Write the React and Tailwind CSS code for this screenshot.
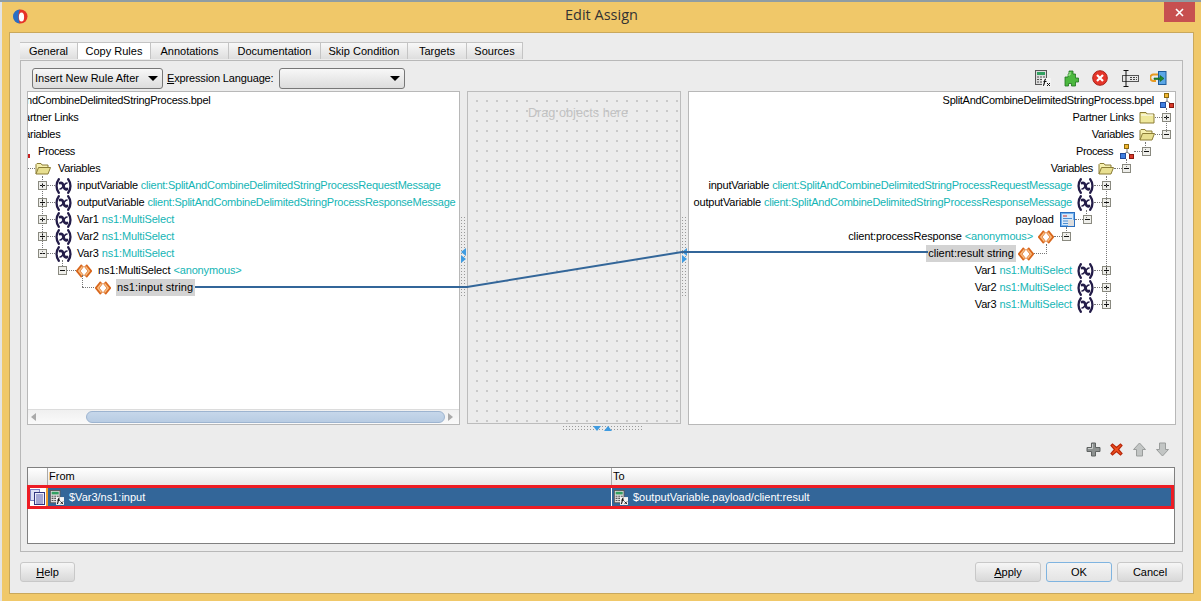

const FONT = "font-['Liberation_Sans',sans-serif]";

function Box({ open }) {
  return (
    <svg width="9" height="9" viewBox="0 0 9 9" className="shrink-0 block">
      <rect x="0.5" y="0.5" width="8" height="8" fill="#eeeeea" stroke="#8a8a80" />
      <path d={open ? "M2 4.5H7" : "M2 4.5H7M4.5 2V7"} stroke="#111" fill="none" />
    </svg>
  );
}
function Dots({ className }) {
  return <span className={`shrink-0 border-t border-dotted border-[#777] h-0 ${className}`} />;
}
function XVar() {
  return (
    <svg width="17" height="16" viewBox="0 0 17 16" className="shrink-0 block">
      <g fill="none" stroke="#231c48" strokeLinecap="round">
        <path d="M3.8 1.2C0.8 5 0.8 11 3.8 14.8" strokeWidth="2.3" />
        <path d="M13.2 1.2C16.2 5 16.2 11 13.2 14.8" strokeWidth="2.3" />
        <path d="M5 5C7 4.2 8 6 8.5 8S10 12.2 12 11" strokeWidth="2.7" />
        <path d="M12 5C10 5 9.5 7 8.5 8S7 11 5 11" strokeWidth="1.6" />
      </g>
    </svg>
  );
}
function Diamond() {
  return (
    <svg width="16" height="14" viewBox="0 0 16 14" className="shrink-0 block">
      <path d="M6.5 1.5L2 7L6.5 12.5M9.5 1.5L14 7L9.5 12.5" fill="none" stroke="#d8661c" strokeWidth="3.6" />
      <path d="M6.5 2.5L2.8 7L6.5 11.5M9.5 2.5L13.2 7L9.5 11.5" fill="none" stroke="#f9bd80" strokeWidth="1.4" />
    </svg>
  );
}
function FolderOpen() {
  return (
    <svg width="16" height="13" viewBox="0 0 16 13" className="shrink-0 block">
      <path d="M1 12V2.5L2 1.5H6L7 3H13V5" fill="#f6f0b0" stroke="#8b7d36" />
      <path d="M1 12L3.5 5.5H15.5L13 12Z" fill="#e8df90" stroke="#8b7d36" />
    </svg>
  );
}
function FolderClosed() {
  return (
    <svg width="16" height="13" viewBox="0 0 16 13" className="shrink-0 block">
      <path d="M1 12V1.5H7L8 3H15V12Z" fill="#efe89c" stroke="#8b7d36" />
      <path d="M2 4H14" stroke="#fff" />
    </svg>
  );
}
function ProcessIcon() {
  return (
    <svg width="14" height="15" viewBox="0 0 14 15" className="shrink-0 block">
      <path d="M7 5V8M3 11L7 8L11 11" stroke="#777" fill="none" />
      <rect x="4.5" y="0.5" width="4" height="4" fill="#f2b632" stroke="#8a6a10" />
      <rect x="0.5" y="9.5" width="5" height="5" fill="#3f7fe0" stroke="#1f4a99" />
      <rect x="9.5" y="10.5" width="4" height="4" fill="#d83a2a" stroke="#8a1a10" />
    </svg>
  );
}
function Payload() {
  return (
    <svg width="15" height="15" viewBox="0 0 15 15" className="shrink-0 block">
      <rect x="0.5" y="0.5" width="14" height="14" fill="#6fb0ee" stroke="#2a6fc0" />
      <rect x="2" y="2" width="11" height="11" fill="#d8e9fa" />
      <path d="M3 4H7" stroke="#c83030" />
      <path d="M3 6.5H12M3 9H12M3 11.5H10" stroke="#4f8fd0" />
      <rect x="8" y="8" width="6" height="6" fill="#dddddd" />
    </svg>
  );
}
function Calc({ small }) {
  return (
    <svg width={small ? 15 : 17} height={small ? 15 : 17} viewBox="0 0 17 17" className="shrink-0 block">
      <rect x="1.5" y="0.5" width="11" height="14" fill="#dcdcdc" stroke="#555" />
      <rect x="3" y="2" width="8" height="3" fill="#31a060" />
      <path d="M3 7H5M6 7H8M9 7H11M3 9.5H5M6 9.5H8M3 12H5M6 12H8" stroke="#555" strokeWidth="1.2" />
      <rect x="8" y="8" width="9" height="9" fill="#f4f4f4" />
      <path d="M12 9C10.5 9 10.7 10.5 10.5 12S10 15.5 9 15.5M9.5 11.5H12.5" stroke="#111" fill="none" strokeWidth="1.2" />
      <path d="M13 13L16 16M16 13L13 16" stroke="#111" />
    </svg>
  );
}
function Puzzle() {
  return (
    <svg width="15" height="17" viewBox="0 0 15 17" className="block">
      <path d="M5 1H9V4H11.5V8H14.5V12H11.5V16H7.5V13.5H4.5V16H1V7H4V4H5Z" fill="#4cb83f" stroke="#20751f" strokeWidth="0.8" />
      <path d="M6 2V5H3" stroke="#b5f0a8" fill="none" />
    </svg>
  );
}
function RedCircle() {
  return (
    <svg width="16" height="16" viewBox="0 0 16 16" className="block">
      <circle cx="8" cy="8" r="7.3" fill="#e5352a" stroke="#a8231a" />
      <path d="M5 5L11 11M11 5L5 11" stroke="#fff" strokeWidth="2.2" />
    </svg>
  );
}
function FieldCursor() {
  return (
    <svg width="18" height="17" viewBox="0 0 18 17" className="block">
      <rect x="1.5" y="5.5" width="16" height="6" fill="#e8e8e8" stroke="#555" />
      <path d="M9 7.5H16M9 9.5H16" stroke="#444" strokeDasharray="2 1" />
      <path d="M2.5 0.5H7.5M2.5 16.5H7.5M5 0.5V16.5" stroke="#111" fill="none" />
    </svg>
  );
}
function ArrowDoor() {
  return (
    <svg width="17" height="16" viewBox="0 0 17 16" className="block">
      <rect x="8.5" y="1.5" width="7.5" height="13" fill="#5aa6e6" stroke="#1c5c9c" />
      <path d="M8 4.5H3.5A2.7 2.7 0 0 0 3.5 11H6" fill="none" stroke="#e89a20" strokeWidth="2" />
      <path d="M4 8H10V5.5L14 8.5L10 11.5V9.5H4Z" fill="#1f8a30" stroke="#14601f" strokeWidth="0.6" />
    </svg>
  );
}
function GrayPlus() {
  return (
    <svg width="15" height="15" viewBox="0 0 15 15" className="block">
      <path d="M5.5 1H9.5V5.5H14V9.5H9.5V14H5.5V9.5H1V5.5H5.5Z" fill="#8d9190" stroke="#5f6362" />
      <path d="M6.5 2V6.5H2" stroke="#c9cccb" fill="none" />
    </svg>
  );
}
function RedX() {
  return (
    <svg width="15" height="15" viewBox="0 0 15 15" className="block">
      <path d="M2 3.5L3.5 2L7.5 5.5L11.5 2L13 3.5L9.5 7.5L13 11.5L11.5 13L7.5 9.5L3.5 13L2 11.5L5.5 7.5Z" fill="#f0501e" stroke="#b8280c" strokeWidth="1.2" />
    </svg>
  );
}
function GrayArrow({ down }) {
  return (
    <svg width="15" height="15" viewBox="0 0 15 15" className={down ? "block rotate-180" : "block"}>
      <path d="M7.5 1L13.5 7.5H10.5V14H4.5V7.5H1.5Z" fill="#c2c5c4" stroke="#9a9d9c" />
    </svg>
  );
}
function CopyIcon() {
  return (
    <svg width="16" height="16" viewBox="0 0 16 16" className="block">
      <rect x="0.5" y="0.5" width="9" height="11" fill="#dde0f5" stroke="#7a80c0" />
      <rect x="4.5" y="3.5" width="10" height="12" fill="#eceefa" stroke="#30357f" />
      <path d="M6 6H13M6 8H13M6 10H13M6 12H13M6 14H13" stroke="#5a60b0" />
    </svg>
  );
}
function AppLogo() {
  return (
    <svg width="15" height="15" viewBox="0 0 15 15" className="block">
      <circle cx="7.5" cy="7.5" r="7" fill="#e63228" />
      <path d="M7 .5A7 7 0 0 0 7 14.5C5 12 5 3 7 .5Z" fill="#2a6fc4" />
      <ellipse cx="8.5" cy="8" rx="2.6" ry="4.6" fill="#fff" />
    </svg>
  );
}
function Caret() {
  return <span className="w-0 h-0 border-l-[5px] border-r-[5px] border-t-[5px] border-l-transparent border-r-transparent border-t-black" />;
}
function Teal({ children, long }) {
  return <span className={`text-[#14b5b5] ${long ? "tracking-[-0.24px]" : "tracking-[-0.14px]"}`}>{children}</span>;
}
function Row({ className = "", children }) {
  return <div className={`flex items-center h-[17px] whitespace-nowrap ${className}`}>{children}</div>;
}
function VarRowL({ open, name, type, long }) {
  return (
    <Row className="ml-[10px]">
      <Box open={open} />
      <Dots className="w-[8px]" />
      <XVar />
      <span className="ml-[5px]"><span className="tracking-[-0.2px]">{name}</span> <Teal long={long}>{type}</Teal></span>
    </Row>
  );
}
function VarRowR({ open, name, type, long }) {
  return (
    <Row className="justify-end mr-[64px]">
      <span><span className="tracking-[-0.2px]">{name}</span> <Teal long={long}>{type}</Teal></span>
      <span className="ml-[5px]"><XVar /></span>
      <Dots className="w-[8px]" />
      <Box open={open} />
    </Row>
  );
}
function Tab({ label, w, active }) {
  return (
    <div className={`${w} h-[17px] flex items-center justify-center border-r border-[#c4c4c4] border-t ${active ? "bg-white" : "bg-gradient-to-b from-[#f8f8f8] to-[#dedede]"}`}>
      {label}
    </div>
  );
}
function Btn({ w, children, ok }) {
  return (
    <div className={`${w} h-[20px] flex items-center justify-center rounded-[3px] border ${ok ? "border-[#7fb4e0] bg-gradient-to-b from-[#f4f4f4] to-[#e4e4e4]" : "border-[#c8c8c8] bg-gradient-to-b from-[#f6f6f6] to-[#d8d8d8]"}`}>
      {children}
    </div>
  );
}
function Sash({ className }) {
  return (
    <div className={`relative w-[7px] h-[80px] bg-[radial-gradient(#999_0.6px,transparent_0.8px)] bg-[size:3px_3px] ${className}`}>
      <span className="absolute left-[1px] top-[32px] w-0 h-0 border-y-[4px] border-r-[5px] border-y-transparent border-r-[#3f9be0]" />
      <span className="absolute left-[1px] top-[39px] w-0 h-0 border-y-[4px] border-l-[5px] border-y-transparent border-l-[#3f9be0]" />
    </div>
  );
}

export default function App() {
  return (
    <div className={`relative w-[1201px] h-[601px] overflow-hidden bg-[#f0c869] flex flex-col text-[11px] leading-none text-black ${FONT}`}>
      <div className="h-[2px] bg-[#8f9da3] shrink-0" />
      <div className="h-[30px] shrink-0 flex items-start relative">
        <div className="ml-[13px] mt-[7px]"><AppLogo /></div>
        <div className="flex-1 text-center pl-[11px] mt-[6px] text-[14.5px] text-[#333] font-['Open_Sans',sans-serif]">Edit Assign</div>
        <div className="w-[31px] h-[20px] bg-[#c75050] mr-[6px] flex items-center justify-center">
          <svg width="9" height="9" viewBox="0 0 9 9"><path d="M1 1L8 8M8 1L1 8" stroke="#fff" strokeWidth="1.6" /></svg>
        </div>
      </div>
      <div className="ml-[9px] mr-[7px] h-[562px] shrink-0 border border-[#c9a85c] bg-[#ececec] flex flex-col px-[10px] pt-[9px]">
        <div className="flex h-[18px] shrink-0">
          <Tab label="General" w="w-[58px]" />
          <Tab label="Copy Rules" w="w-[73px]" active />
          <Tab label="Annotations" w="w-[78px]" />
          <Tab label="Documentation" w="w-[92px]" />
          <Tab label="Skip Condition" w="w-[87px]" />
          <Tab label="Targets" w="w-[59px]" />
          <Tab label="Sources" w="w-[56px]" />
        </div>
        <div className="w-[1163px] h-[492px] border border-[#b8b8b8] flex flex-col px-[6px]">
          <div className="flex items-center h-[30px] shrink-0 pt-[4px]">
            <div className="w-[131px] h-[21px] ml-[5px] border border-[#777] rounded-[3px] bg-gradient-to-b from-[#f8f8f8] to-[#dcdcdc] flex items-center justify-between pl-[2px] pr-[4px]">
              <span>Insert New Rule After</span><Caret />
            </div>
            <span className="ml-[4px] w-[107px] whitespace-nowrap tracking-[-0.15px]"><span className="underline">E</span>xpression Language:</span>
            <div className="w-[126px] h-[21px] ml-[5px] border border-[#777] rounded-[3px] bg-gradient-to-b from-[#f8f8f8] to-[#dcdcdc] flex items-center justify-end pr-[4px]">
              <Caret />
            </div>
            <div className="ml-auto flex items-center mr-[9px]">
              <Calc />
              <span className="ml-[13px]"><Puzzle /></span>
              <span className="ml-[13px]"><RedCircle /></span>
              <span className="ml-[13px]"><FieldCursor /></span>
              <span className="ml-[11px]"><ArrowDoor /></span>
            </div>
          </div>
          <div className="flex h-[334px] shrink-0">
            <div className="relative w-[433px] h-[334px] border border-[#b8b8b8] bg-white overflow-hidden flex flex-col ml-0">
              <Row className="ml-[-29px] tracking-[-0.28px]">SplitAndCombineDelimitedStringProcess.bpel</Row>
              <Row className="ml-[-11px] tracking-[-0.25px]">Partner Links</Row>
              <Row className="ml-[-10px] tracking-[-0.3px]">Variables</Row>
              <Row className="ml-[10px] tracking-[-0.4px]">Process</Row>
              <Row>
                <Dots className="w-[7px]" />
                <FolderOpen />
                <span className="ml-[7px] tracking-[-0.3px]">Variables</span>
              </Row>
              <VarRowL long name="inputVariable" type="client:SplitAndCombineDelimitedStringProcessRequestMessage" />
              <VarRowL long name="outputVariable" type="client:SplitAndCombineDelimitedStringProcessResponseMessage" />
              <VarRowL name="Var1" type="ns1:MultiSelect" />
              <VarRowL name="Var2" type="ns1:MultiSelect" />
              <VarRowL open name="Var3" type="ns1:MultiSelect" />
              <Row className="ml-[30px]">
                <Box open />
                <Dots className="w-[9px]" />
                <Diamond />
                <span className="ml-[6px]"><span className="tracking-[-0.15px]">ns1:MultiSelect</span> <Teal>&lt;anonymous&gt;</Teal></span>
              </Row>
              <Row className="ml-[54px]">
                <Dots className="w-[12px]" />
                <span className="ml-[1px]"><Diamond /></span>
                <span className="ml-[5px] h-[17px] w-[79px] flex items-center bg-[#d3d3d3] pl-[1px] tracking-[0.1px]">ns1:input string</span>
              </Row>
              <span className="absolute left-[0px] top-[62px] w-[2px] h-[4px] bg-[#c82020]" />
              <span className="absolute left-[14px] top-[84px] h-[78px] border-l border-dotted border-[#777]" />
              <span className="absolute left-[34px] top-[168px] h-[6px] border-l border-dotted border-[#777]" />
              <span className="absolute left-[54px] top-[183px] h-[12px] border-l border-dotted border-[#777]" />
              <div className="absolute left-0 right-0 bottom-0 h-[15px] bg-gradient-to-b from-[#f0f0f0] to-[#fafafa] border-t border-[#dcdcdc] flex items-center">
                <span className="ml-[3px] w-0 h-0 border-y-[4px] border-r-[5px] border-y-transparent border-r-[#aaa]" />
                <span className="ml-[50px] w-[359px] h-[12px] rounded-[6px] border border-[#9db4d0] bg-gradient-to-b from-[#c6d7ea] to-[#b8cce3]" />
                <span className="ml-[3px] w-0 h-0 border-y-[4px] border-l-[5px] border-y-transparent border-l-[#aaa]" />
              </div>
            </div>
            <Sash className="mt-[125px]" />
            <div className="w-[214px] h-[333px] border border-[#bcbcbc] bg-[#ececec] bg-[radial-gradient(#c8c8c8_0.7px,transparent_1px)] bg-[size:10px_10px] bg-[position:4px_4px] text-center pt-[15px] pl-[8px] text-[12.7px] text-[#c2c2c2]">
              Drag objects here
            </div>
            <Sash className="mt-[125px]" />
            <div className="relative w-[488px] h-[334px] border border-[#b8b8b8] bg-white overflow-hidden flex flex-col">
              <Row className="justify-end mr-[1px]">
                <span className="tracking-[-0.28px]">SplitAndCombineDelimitedStringProcess.bpel</span>
                <span className="ml-[6px]"><ProcessIcon /></span>
              </Row>
              <Row className="justify-end mr-[4px]">
                <span className="tracking-[-0.25px]">Partner Links</span>
                <span className="ml-[5px]"><FolderClosed /></span>
                <Dots className="w-[7px]" />
                <Box />
              </Row>
              <Row className="justify-end mr-[4px]">
                <span className="tracking-[-0.3px]">Variables</span>
                <span className="ml-[5px]"><FolderOpen /></span>
                <Dots className="w-[7px]" />
                <Box open />
              </Row>
              <Row className="justify-end mr-[24px]">
                <span className="tracking-[-0.4px]">Process</span>
                <span className="ml-[7px]"><ProcessIcon /></span>
                <Dots className="w-[8px]" />
                <Box open />
              </Row>
              <Row className="justify-end mr-[44px]">
                <span className="tracking-[-0.3px]">Variables</span>
                <span className="ml-[5px]"><FolderOpen /></span>
                <Dots className="w-[8px]" />
                <Box open />
              </Row>
              <VarRowR long name="inputVariable" type="client:SplitAndCombineDelimitedStringProcessRequestMessage" />
              <VarRowR long open name="outputVariable" type="client:SplitAndCombineDelimitedStringProcessResponseMessage" />
              <Row className="justify-end mr-[83px]">
                <span>payload</span>
                <span className="ml-[6px]"><Payload /></span>
                <Dots className="w-[8px]" />
                <Box open />
              </Row>
              <Row className="justify-end mr-[104px]">
                <span><span className="tracking-[-0.15px]">client:processResponse</span> <Teal>&lt;anonymous&gt;</Teal></span>
                <span className="ml-[5px]"><Diamond /></span>
                <Dots className="w-[8px]" />
                <Box open />
              </Row>
              <Row className="justify-end mr-[128px]">
                <span className="h-[17px] w-[90px] flex items-center justify-center bg-[#d3d3d3]">client:result string</span>
                <span className="ml-[2px]"><Diamond /></span>
                <Dots className="w-[13px]" />
              </Row>
              <VarRowR name="Var1" type="ns1:MultiSelect" />
              <VarRowR name="Var2" type="ns1:MultiSelect" />
              <VarRowR name="Var3" type="ns1:MultiSelect" />
              <span className="absolute right-[8px] top-[16px] h-[24px] border-l border-dotted border-[#777]" />
              <span className="absolute right-[29px] top-[50px] h-[8px] border-l border-dotted border-[#777]" />
              <span className="absolute right-[48px] top-[67px] h-[8px] border-l border-dotted border-[#777]" />
              <span className="absolute right-[68px] top-[84px] h-[128px] border-l border-dotted border-[#777]" />
              <span className="absolute right-[88px] top-[118px] h-[8px] border-l border-dotted border-[#777]" />
              <span className="absolute right-[108px] top-[135px] h-[8px] border-l border-dotted border-[#777]" />
              <span className="absolute right-[128px] top-[152px] h-[8px] border-l border-dotted border-[#777]" />
            </div>
          </div>
          <div className="ml-[535px] w-[80px] h-[7px] flex items-center justify-center gap-[3px] bg-[radial-gradient(#999_0.6px,transparent_0.8px)] bg-[size:3px_3px]">
            <span className="w-0 h-0 border-x-[4px] border-t-[5px] border-x-transparent border-t-[#3f9be0]" />
            <span className="w-0 h-0 border-x-[4px] border-b-[5px] border-x-transparent border-b-[#3f9be0]" />
          </div>
          <div className="flex items-center justify-end gap-[8px] h-[35px] shrink-0 pr-[6px]">
            <GrayPlus /><RedX /><GrayArrow /><GrayArrow down />
          </div>
          <div className="relative w-[1148px] h-[77px] border border-[#808080] bg-white flex flex-col shrink-0">
            <div className="flex h-[17px] shrink-0 bg-gradient-to-b from-white to-[#e8e8e8]">
              <div className="w-[20px] border-r border-[#aaa]" />
              <div className="w-[564px] border-r border-[#aaa] pl-[1px] flex items-center">From</div>
              <div className="flex-1 pl-[1px] flex items-center">To</div>
            </div>
            <div className="h-[24px] -ml-[1px] border-[3px] border-[#ed1c24] bg-[#336699] flex items-center text-white">
              <div className="w-[18px] h-[18px] bg-white border-r-2 border-[#f0a030] flex items-center justify-center"><CopyIcon /></div>
              <div className="w-[564px] h-full flex items-center border-r border-white pl-[1px]">
                <Calc small />
                <span className="ml-[5px]">$Var3/ns1:input</span>
              </div>
              <div className="flex-1 h-full flex items-center pl-[1px]">
                <Calc small />
                <span className="ml-[5px]">$outputVariable.payload/client:result</span>
              </div>
            </div>
          </div>
        </div>
        <div className="flex items-start pt-[10px]">
          <Btn w="w-[55px]"><span><span className="underline">H</span>elp</span></Btn>
          <div className="ml-auto flex gap-[5px]">
            <Btn w="w-[66px]"><span><span className="underline">A</span>pply</span></Btn>
            <Btn w="w-[66px]" ok>OK</Btn>
            <Btn w="w-[66px]">Cancel</Btn>
          </div>
        </div>
      </div>
      <div className="absolute left-0 top-[2px] bottom-0 w-[2px] bg-[#e4e4e4]" />
      <svg className="absolute left-0 top-0 pointer-events-none" width="1201" height="601">
        <polyline points="195,287 467,287 682,252 928,252" fill="none" stroke="#336699" strokeWidth="2" />
      </svg>
    </div>
  );
}
